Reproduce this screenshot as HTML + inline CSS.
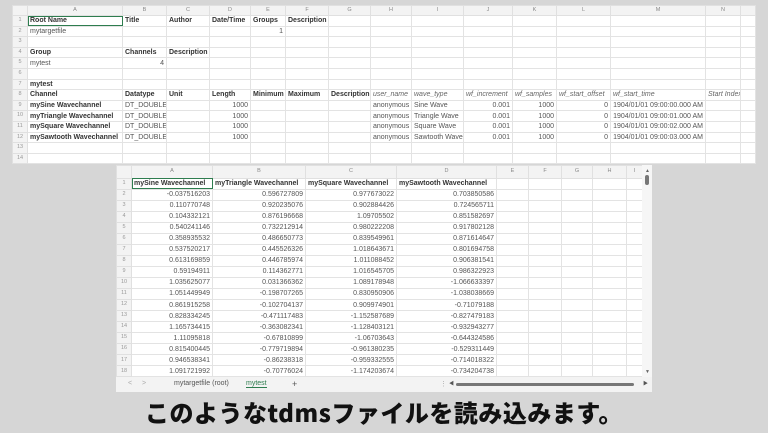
<!DOCTYPE html>
<html><head><meta charset="utf-8"><style>
body{margin:0;width:768px;height:433px;background:#d6d6d6;position:relative;overflow:hidden;font-family:"Liberation Sans","Noto Sans CJK JP",sans-serif}
table{position:absolute;border-collapse:collapse;table-layout:fixed;background:#fff;font-size:7px;color:#555}
td{border:1px solid #e3e3e3;padding:0 2px;white-space:nowrap;overflow:hidden;line-height:1}
tr.h td{background:#f3f3f3;color:#888;text-align:center;font-size:5.5px;border-color:#e0e0e0}
td.n{background:#f3f3f3;color:#999;text-align:center;font-size:5.5px;border-color:#e0e0e0}
td.r{text-align:right}
.b{font-weight:bold;color:#333}
.i{font-style:italic;color:#666}
.sel{outline:1.5px solid #2e7d4f;outline-offset:-1px}
#top{left:12px;top:5px;width:743px}
#top tr{height:10.6px}
#top tr.h{height:10px}
#bot{left:116px;top:165px;width:526px}
#bot tr{height:11.06px}
#bot tr.h{height:12.5px}
</style></head><body>
<table id="top">
<colgroup><col style="width:15px"><col style="width:95px"><col style="width:44px"><col style="width:43px"><col style="width:41px"><col style="width:35px"><col style="width:43px"><col style="width:42px"><col style="width:41px"><col style="width:52px"><col style="width:49px"><col style="width:44px"><col style="width:54px"><col style="width:95px"><col style="width:35px"><col style="width:15px"></colgroup>
<tr class="h"><td></td><td>A</td><td>B</td><td>C</td><td>D</td><td>E</td><td>F</td><td>G</td><td>H</td><td>I</td><td>J</td><td>K</td><td>L</td><td>M</td><td>N</td><td></td></tr>
<tr><td class="n">1</td><td class="b sel">Root Name</td><td class="b">Title</td><td class="b">Author</td><td class="b">Date/Time</td><td class="b">Groups</td><td class="b">Description</td><td></td><td></td><td></td><td></td><td></td><td></td><td></td><td></td><td></td></tr>
<tr><td class="n">2</td><td>mytargetfile</td><td></td><td></td><td></td><td class="r">1</td><td></td><td></td><td></td><td></td><td></td><td></td><td></td><td></td><td></td><td></td></tr>
<tr><td class="n">3</td><td></td><td></td><td></td><td></td><td></td><td></td><td></td><td></td><td></td><td></td><td></td><td></td><td></td><td></td><td></td></tr>
<tr><td class="n">4</td><td class="b">Group</td><td class="b">Channels</td><td class="b">Description</td><td></td><td></td><td></td><td></td><td></td><td></td><td></td><td></td><td></td><td></td><td></td><td></td></tr>
<tr><td class="n">5</td><td>mytest</td><td class="r">4</td><td></td><td></td><td></td><td></td><td></td><td></td><td></td><td></td><td></td><td></td><td></td><td></td><td></td></tr>
<tr><td class="n">6</td><td></td><td></td><td></td><td></td><td></td><td></td><td></td><td></td><td></td><td></td><td></td><td></td><td></td><td></td><td></td></tr>
<tr><td class="n">7</td><td class="b">mytest</td><td></td><td></td><td></td><td></td><td></td><td></td><td></td><td></td><td></td><td></td><td></td><td></td><td></td><td></td></tr>
<tr><td class="n">8</td><td class="b">Channel</td><td class="b">Datatype</td><td class="b">Unit</td><td class="b">Length</td><td class="b">Minimum</td><td class="b">Maximum</td><td class="b">Description</td><td class="i">user_name</td><td class="i">wave_type</td><td class="i">wf_increment</td><td class="i">wf_samples</td><td class="i">wf_start_offset</td><td class="i">wf_start_time</td><td class="i">Start Index</td><td></td></tr>
<tr><td class="n">9</td><td class="b">mySine Wavechannel</td><td>DT_DOUBLE</td><td></td><td class="r">1000</td><td></td><td></td><td></td><td>anonymous</td><td>Sine Wave</td><td class="r">0.001</td><td class="r">1000</td><td class="r">0</td><td class="r">1904/01/01 09:00:00.000 AM</td><td></td><td></td></tr>
<tr><td class="n">10</td><td class="b">myTriangle Wavechannel</td><td>DT_DOUBLE</td><td></td><td class="r">1000</td><td></td><td></td><td></td><td>anonymous</td><td>Triangle Wave</td><td class="r">0.001</td><td class="r">1000</td><td class="r">0</td><td class="r">1904/01/01 09:00:01.000 AM</td><td></td><td></td></tr>
<tr><td class="n">11</td><td class="b">mySquare Wavechannel</td><td>DT_DOUBLE</td><td></td><td class="r">1000</td><td></td><td></td><td></td><td>anonymous</td><td>Square Wave</td><td class="r">0.001</td><td class="r">1000</td><td class="r">0</td><td class="r">1904/01/01 09:00:02.000 AM</td><td></td><td></td></tr>
<tr><td class="n">12</td><td class="b">mySawtooth Wavechannel</td><td>DT_DOUBLE</td><td></td><td class="r">1000</td><td></td><td></td><td></td><td>anonymous</td><td>Sawtooth Wave</td><td class="r">0.001</td><td class="r">1000</td><td class="r">0</td><td class="r">1904/01/01 09:00:03.000 AM</td><td></td><td></td></tr>
<tr><td class="n">13</td><td></td><td></td><td></td><td></td><td></td><td></td><td></td><td></td><td></td><td></td><td></td><td></td><td></td><td></td><td></td></tr>
<tr><td class="n">14</td><td></td><td></td><td></td><td></td><td></td><td></td><td></td><td></td><td></td><td></td><td></td><td></td><td></td><td></td><td></td></tr>
</table>

<table id="bot">
<colgroup><col style="width:15px"><col style="width:81px"><col style="width:93px"><col style="width:91px"><col style="width:100px"><col style="width:32px"><col style="width:33px"><col style="width:31px"><col style="width:34px"><col style="width:16px"></colgroup>
<tr class="h"><td></td><td>A</td><td>B</td><td>C</td><td>D</td><td>E</td><td>F</td><td>G</td><td>H</td><td>I</td></tr>
<tr><td class="n">1</td><td class="b sel">mySine Wavechannel</td><td class="b">myTriangle Wavechannel</td><td class="b">mySquare Wavechannel</td><td class="b">mySawtooth Wavechannel</td><td></td><td></td><td></td><td></td><td></td></tr>
<tr><td class="n">2</td><td class="r">-0.037516203</td><td class="r">0.596727809</td><td class="r">0.977673022</td><td class="r">0.703850586</td><td></td><td></td><td></td><td></td><td></td></tr>
<tr><td class="n">3</td><td class="r">0.110770748</td><td class="r">0.920235076</td><td class="r">0.902884426</td><td class="r">0.724565711</td><td></td><td></td><td></td><td></td><td></td></tr>
<tr><td class="n">4</td><td class="r">0.104332121</td><td class="r">0.876196668</td><td class="r">1.09705502</td><td class="r">0.851582697</td><td></td><td></td><td></td><td></td><td></td></tr>
<tr><td class="n">5</td><td class="r">0.540241146</td><td class="r">0.732212914</td><td class="r">0.980222208</td><td class="r">0.917802128</td><td></td><td></td><td></td><td></td><td></td></tr>
<tr><td class="n">6</td><td class="r">0.358935532</td><td class="r">0.486650773</td><td class="r">0.839549961</td><td class="r">0.871614647</td><td></td><td></td><td></td><td></td><td></td></tr>
<tr><td class="n">7</td><td class="r">0.537520217</td><td class="r">0.445526326</td><td class="r">1.018643671</td><td class="r">0.801694758</td><td></td><td></td><td></td><td></td><td></td></tr>
<tr><td class="n">8</td><td class="r">0.613169859</td><td class="r">0.446785974</td><td class="r">1.011088452</td><td class="r">0.906381541</td><td></td><td></td><td></td><td></td><td></td></tr>
<tr><td class="n">9</td><td class="r">0.59194911</td><td class="r">0.114362771</td><td class="r">1.016545705</td><td class="r">0.986322923</td><td></td><td></td><td></td><td></td><td></td></tr>
<tr><td class="n">10</td><td class="r">1.035625077</td><td class="r">0.031366362</td><td class="r">1.089178948</td><td class="r">-1.066633397</td><td></td><td></td><td></td><td></td><td></td></tr>
<tr><td class="n">11</td><td class="r">1.051449949</td><td class="r">-0.198707265</td><td class="r">0.830950906</td><td class="r">-1.038038669</td><td></td><td></td><td></td><td></td><td></td></tr>
<tr><td class="n">12</td><td class="r">0.861915258</td><td class="r">-0.102704137</td><td class="r">0.909974901</td><td class="r">-0.71079188</td><td></td><td></td><td></td><td></td><td></td></tr>
<tr><td class="n">13</td><td class="r">0.828334245</td><td class="r">-0.471117483</td><td class="r">-1.152587689</td><td class="r">-0.827479183</td><td></td><td></td><td></td><td></td><td></td></tr>
<tr><td class="n">14</td><td class="r">1.165734415</td><td class="r">-0.363082341</td><td class="r">-1.128403121</td><td class="r">-0.932943277</td><td></td><td></td><td></td><td></td><td></td></tr>
<tr><td class="n">15</td><td class="r">1.11095818</td><td class="r">-0.67810899</td><td class="r">-1.06703643</td><td class="r">-0.644324586</td><td></td><td></td><td></td><td></td><td></td></tr>
<tr><td class="n">16</td><td class="r">0.815400445</td><td class="r">-0.779719894</td><td class="r">-0.961380235</td><td class="r">-0.529311449</td><td></td><td></td><td></td><td></td><td></td></tr>
<tr><td class="n">17</td><td class="r">0.946538341</td><td class="r">-0.86238318</td><td class="r">-0.959332555</td><td class="r">-0.714018322</td><td></td><td></td><td></td><td></td><td></td></tr>
<tr><td class="n">18</td><td class="r">1.091721992</td><td class="r">-0.70776024</td><td class="r">-1.174203674</td><td class="r">-0.734204738</td><td></td><td></td><td></td><td></td><td></td></tr>
</table>
<div style="position:absolute;left:642px;top:165px;width:10px;height:212px;background:#f6f6f6"></div>
<div style="position:absolute;left:645px;top:168px;font-size:5px;color:#666">▲</div>
<div style="position:absolute;left:645px;top:175px;width:4px;height:10px;border-radius:2px;background:#777"></div>
<div style="position:absolute;left:645px;top:369px;font-size:5px;color:#666">▼</div>
<div style="position:absolute;left:116px;top:377px;width:536px;height:15px;background:#f3f3f3;font-size:7px;color:#555">
  <span style="position:absolute;left:12px;top:3px;color:#aaa">&lt;</span>
  <span style="position:absolute;left:26px;top:3px;color:#aaa">&gt;</span>
  <span style="position:absolute;left:58px;top:3px">mytargetfile (root)</span>
  <span style="position:absolute;left:130px;top:3px;color:#2e7d4f;border-bottom:1.5px solid #2e7d4f">mytest</span>
  <span style="position:absolute;left:176px;top:2px;font-size:9px">+</span>
  <span style="position:absolute;left:324px;top:3px;color:#aaa">⋮</span>
  <span style="position:absolute;left:333px;top:3px;font-size:5px">◀</span>
  <div style="position:absolute;left:340px;top:6px;width:178px;height:3px;border-radius:2px;background:#777"></div>
  <span style="position:absolute;left:527px;top:3px;font-size:5px">▶</span>
</div>
<div style="position:absolute;left:0;top:397px;width:768px;text-align:center;font-family:'Noto Sans CJK JP',sans-serif;font-weight:900;font-size:24px;line-height:30px;color:#111;letter-spacing:0.5px">このようなtdmsファイルを読み込みます。</div>
</body></html>
